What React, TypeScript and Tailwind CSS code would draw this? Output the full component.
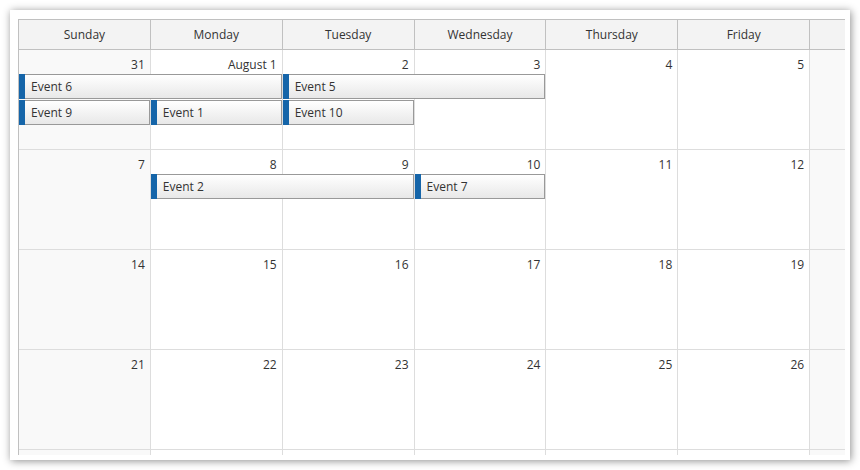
import React from 'react';

type Ev = { text: string; start: number; span: number; row: number };

// Saturday column is cut off by the scroll area, so its labels stay empty
const days = ['Sunday', 'Monday', 'Tuesday', 'Wednesday', 'Thursday', 'Friday', ''];

const weeks: { labels: string[]; events: Ev[] }[] = [
  {
    labels: ['31', 'August 1', '2', '3', '4', '5', ''],
    events: [
      { text: 'Event 6', start: 1, span: 2, row: 2 },
      { text: 'Event 5', start: 3, span: 2, row: 2 },
      { text: 'Event 9', start: 1, span: 1, row: 3 },
      { text: 'Event 1', start: 2, span: 1, row: 3 },
      { text: 'Event 10', start: 3, span: 1, row: 3 },
    ],
  },
  {
    labels: ['7', '8', '9', '10', '11', '12', ''],
    events: [
      { text: 'Event 2', start: 2, span: 2, row: 2 },
      { text: 'Event 7', start: 4, span: 1, row: 2 },
    ],
  },
  { labels: ['14', '15', '16', '17', '18', '19', ''], events: [] },
  { labels: ['21', '22', '23', '24', '25', '26', ''], events: [] },
  { labels: ['', '', '', '', '', '', ''], events: [] },
];

const Event: React.FC<{ ev: Ev }> = ({ ev }) => (
  <div
    className="flex h-[25px] mr-px z-10"
    style={{ gridColumn: `${ev.start} / span ${ev.span}`, gridRow: ev.row }}
  >
    <div className="w-[6px] bg-[#1565a9] shrink-0" />
    <div className="flex-1 flex items-center pl-[6px] border border-l-0 border-[#999] bg-linear-to-b from-white to-[#e8e8e8] text-[#333]">
      {ev.text}
    </div>
  </div>
);

export default function App() {
  return (
    <div className="w-[860px] h-[470px] bg-white pt-[10px] pl-[10px]" style={{ fontFamily: '"Open Sans", "Noto Sans", sans-serif' }}>
      <div className="w-[840px] h-[450px] bg-white shadow-[1px_1px_8px_rgba(0,0,0,0.45)] pl-[8px] pt-[9px]">
        <div className="w-[827px] h-[436px] overflow-hidden">
          <div className="w-[924px] border-l border-[#c0c0c0] text-[12px] text-[#333]">
            {/* header */}
            <div className="grid grid-cols-7 h-[31px] border-t border-b border-[#c0c0c0] bg-[#f3f3f3]">
              {days.map((d, i) => (
                <div key={i} className="flex items-center justify-center border-r border-[#c0c0c0]">
                  {d}
                </div>
              ))}
            </div>
            {/* weeks */}
            {weeks.map((w, wi) => (
              <div key={wi} className="grid grid-cols-7 grid-rows-[24px_26px_26px_1fr] h-[100px] border-b border-[#ddd]">
                {w.labels.map((l, i) => (
                  <div
                    key={i}
                    className={`row-start-1 row-span-4 border-r border-[#ddd] text-right pr-[5px] pt-[7px] leading-[16px] ${
                      i === 0 || i === 6 ? 'bg-[#f9f9f9]' : 'bg-white'
                    }`}
                    style={{ gridColumn: i + 1 }}
                  >
                    {l}
                  </div>
                ))}
                {w.events.map((ev) => (
                  <Event key={ev.text} ev={ev} />
                ))}
              </div>
            ))}
          </div>
        </div>
      </div>
    </div>
  );
}
